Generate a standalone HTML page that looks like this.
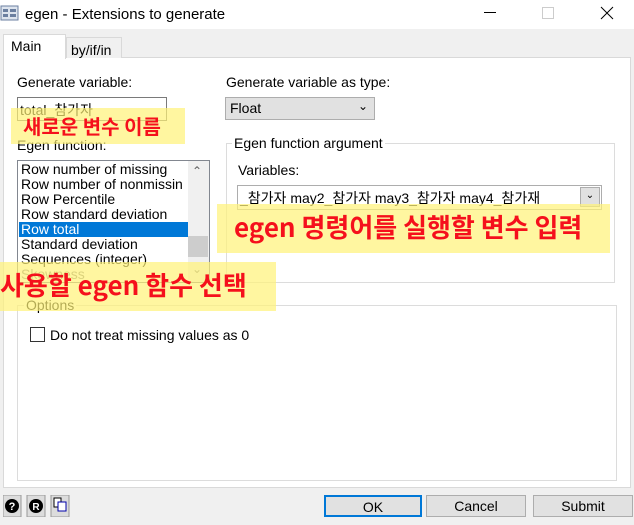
<!DOCTYPE html>
<html><head><meta charset="utf-8"><style>
*{box-sizing:border-box;margin:0;padding:0}
body{width:634px;height:525px;background:#f0f0f0;font-family:"Liberation Sans","Noto Sans CJK KR",sans-serif;font-size:14px;color:#000;position:relative;overflow:hidden}
.a{position:absolute}
.k{font-family:"Liberation Sans","Noto Sans CJK KR",sans-serif}
.hl{position:absolute;background:rgba(255,242,120,0.7);color:#f5101c;font-weight:bold;font-family:"Noto Sans CJK KR",sans-serif;white-space:nowrap}
.btn{position:absolute;top:495px;height:22px;width:80px;background:#e1e1e1;border:1px solid #adadad;text-align:center;line-height:20px;font-size:14px}
</style></head><body>
<div class="a" style="left:0;top:0;width:634px;height:29px;background:#fff"></div>
<svg class="a" style="left:0;top:3px" width="20" height="20"><rect x="1" y="3" width="17" height="14" fill="#dde4ee" stroke="#6b7fa0"/><rect x="3" y="6" width="5" height="3" fill="#6b7fa0"/><rect x="10" y="6" width="6" height="3" fill="#6b7fa0"/><rect x="3" y="11" width="5" height="3" fill="#6b7fa0"/><rect x="10" y="11" width="6" height="3" fill="#6b7fa0"/></svg>
<div class="a" style="left:25px;top:6px;font-size:15px">egen - Extensions to generate</div>
<div class="a" style="left:484px;top:12px;width:12px;height:1px;background:#000"></div>
<div class="a" style="left:542px;top:7px;width:12px;height:12px;border:1px solid #ccc"></div>
<svg class="a" style="left:600px;top:6px" width="14" height="14"><path d="M1 1L13 13M13 1L1 13" stroke="#000" stroke-width="1"/></svg>
<div class="a" style="left:3px;top:57px;width:628px;height:431px;background:#fff;border:1px solid #d9d9d9"></div>
<div class="a" style="left:66px;top:37px;width:56px;height:21px;background:#f0f0f0;border:1px solid #d9d9d9;border-bottom:none;padding:4px 0 0 4px">by/if/in</div>
<div class="a" style="left:3px;top:34px;width:63px;height:25px;background:#fff;border:1px solid #d9d9d9;border-bottom:none;padding:3px 0 0 7px">Main</div>
<div class="a" style="left:17px;top:74px">Generate variable:</div>
<div class="a k" style="left:17px;top:97px;width:150px;height:24px;border:1px solid #7a7a7a;padding:2px 0 0 2px">total_참가자</div>
<div class="a" style="left:17px;top:137px">Egen function:</div>
<div class="a" style="left:17px;top:160px;width:193px;height:123px;border:1px solid #828790;line-height:15px;padding:1px 0 0 3px;overflow:hidden">
<div>Row number of missing</div><div style="white-space:nowrap">Row number of nonmissin</div><div>Row Percentile</div><div>Row standard deviation</div>
<div style="background:#0078d7;color:#fff;margin-left:-2px;padding-left:2px;width:169px">Row total</div><div>Standard deviation</div><div>Sequences (integer)</div><div style="color:#888">Skewness</div></div>
<div class="a" style="left:188px;top:161px;width:21px;height:121px;background:#f0f0f0"></div>
<div class="a" style="left:188px;top:236px;width:20px;height:21px;background:#cdcdcd"></div>
<div class="a" style="left:192px;top:164px;font-size:12px;color:#606060">&#8963;</div>
<div class="a" style="left:192px;top:262px;font-size:12px;color:#888">&#8964;</div>
<div class="a" style="left:226px;top:74px">Generate variable as type:</div>
<div class="a" style="left:225px;top:97px;width:150px;height:23px;background:#e1e1e1;border:1px solid #adadad;padding:2px 0 0 4px">Float</div>
<div class="a" style="left:358px;top:99px;font-size:12px">&#8964;</div>
<div class="a" style="left:226px;top:143px;width:389px;height:140px;border:1px solid #dcdcdc"></div>
<div class="a" style="left:232px;top:135px;background:#fff;padding:0 2px">Egen function argument</div>
<div class="a" style="left:238px;top:162px">Variables:</div>
<div class="a k" style="left:237px;top:185px;width:365px;height:25px;border:1px solid #adadad;padding:2px 0 0 2px;white-space:nowrap;overflow:hidden">_참가자 may2_참가자 may3_참가자 may4_참가재</div>
<div class="a" style="left:580px;top:187px;width:20px;height:20px;background:#e1e1e1;border:1px solid #adadad;font-size:10px;text-align:center;line-height:16px">&#8964;</div>
<div class="a" style="left:17px;top:305px;width:600px;height:176px;border:1px solid #dcdcdc"></div>
<div class="a" style="left:24px;top:297px;background:#fff;padding:0 2px">Options</div>
<div class="a" style="left:30px;top:327px;width:15px;height:15px;border:1px solid #333"></div>
<div class="a" style="left:50px;top:327px">Do not treat missing values as 0</div>
<div class="hl" style="left:11px;top:108px;width:174px;height:36px;font-size:20px;padding:3px 0 0 12px">새로운 변수 이름</div>
<div class="hl" style="left:0;top:262px;width:276px;height:49px;font-size:26px;padding:6px 0 0 0;line-height:34px">사용할 egen 함수 선택</div>
<div class="hl" style="left:217px;top:204px;width:393px;height:49px;font-size:26px;padding:6px 0 0 17px;line-height:34px">egen 명령어를 실행할 변수 입력</div>
<svg class="a" style="left:3px;top:495px" width="72" height="22">
<rect x="0" y="0" width="18" height="22" fill="#dcdcdc" stroke="#999"/><circle cx="9" cy="11" r="7" fill="#000"/><text x="9" y="15" fill="#fff" font-size="11" font-weight="bold" text-anchor="middle" font-family="Liberation Sans">?</text>
<rect x="24" y="0" width="18" height="22" fill="#dcdcdc" stroke="#999"/><circle cx="33" cy="11" r="7" fill="#000"/><text x="33" y="15" fill="#fff" font-size="10" font-weight="bold" text-anchor="middle" font-family="Liberation Sans">R</text>
<rect x="48" y="0" width="18" height="22" fill="#dcdcdc" stroke="#999"/><rect x="51" y="3" width="7" height="9" fill="#fff" stroke="#000"/><rect x="55" y="7" width="8" height="9" fill="#fff" stroke="#00a"/></svg>
<div class="btn" style="left:324px;width:98px;border:2px solid #0078d7">OK</div>
<div class="btn" style="left:426px;width:100px">Cancel</div>
<div class="btn" style="left:533px;width:100px">Submit</div>
</body></html>
